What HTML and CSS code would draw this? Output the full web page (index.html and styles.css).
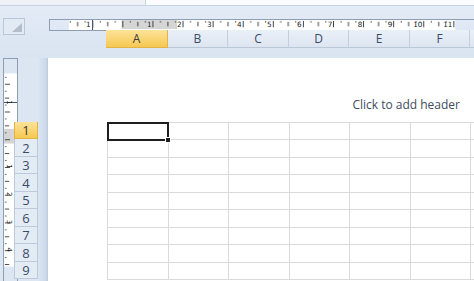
FILE: index.html
```html
<!DOCTYPE html>
<html>
<head>
<meta charset="utf-8">
<link rel="stylesheet" href="styles.css">
</head>
<body>
<div class="app">
  <div class="topstrip"><div class="ts-left"></div><div class="ts-right"></div></div>
  <div class="chrome">
    <div class="corner"><span class="tri"></span></div>
    <div class="hruler-area">
      <svg class="hruler" width="425" height="11" viewBox="0 0 425 11">
        <defs>
          <pattern id="hp" patternUnits="userSpaceOnUse" x="92" y="0" width="33.1" height="11">
            <rect x="0" y="1" width="1" height="7" fill="#333"/>
            <rect x="8.3" y="1" width="1" height="2" fill="#555"/>
            <rect x="16.5" y="2" width="1" height="5" fill="#333"/>
            <rect x="24.8" y="1" width="1" height="2" fill="#555"/>
          </pattern>
        </defs>
        <rect x="0" y="0" width="425" height="11" fill="#fff"/>
        <rect x="58" y="0" width="61" height="10" fill="#d5d5d5"/>
        <rect x="0" y="0" width="425" height="11" fill="url(#hp)"/>
        <rect x="25.5" y="0" width="1.2" height="11" fill="#4a5668"/>
        <g class="rnum" text-anchor="end">
          <text x="24" y="8">1</text>
          <text x="91" y="8">1</text>
          <text x="124" y="8">2</text>
          <text x="157" y="8">3</text>
          <text x="190" y="8">4</text>
          <text x="223" y="8">5</text>
          <text x="256" y="8">6</text>
          <text x="290" y="8">7</text>
          <text x="323" y="8">8</text>
          <text x="356" y="8">9</text>
          <text x="389" y="8">10</text>
          <text x="422" y="8">11</text>
        </g>
      </svg>
      <div class="colheads">
        <div class="ch w61 sel">A</div>
        <div class="ch w60">B</div>
        <div class="ch w61">C</div>
        <div class="ch w60">D</div>
        <div class="ch w61">E</div>
        <div class="ch w60">F</div>
        <div class="ch rest"></div>
      </div>
    </div>
  </div>
  <div class="body">
    <div class="side">
      <svg class="vruler" width="15" height="223" viewBox="0 0 15 223">
        <defs>
          <pattern id="vp" patternUnits="userSpaceOnUse" x="0" y="108" width="15" height="32">
            <rect x="1" y="0" width="6" height="1" fill="#333"/>
            <rect x="1" y="8" width="2" height="1" fill="#555"/>
            <rect x="1" y="16" width="5" height="1" fill="#333"/>
            <rect x="1" y="24" width="2" height="1" fill="#555"/>
          </pattern>
        </defs>
        <rect x="0" y="0" width="15" height="223" fill="#fff"/>
        <rect x="0" y="64" width="15" height="17" fill="#d5d5d5"/>
        <rect x="0" y="0" width="15" height="223" fill="url(#vp)"/>
        <rect x="0" y="33" width="15" height="1.2" fill="#4a5668"/>
        <g class="rnum" text-anchor="end">
          <text transform="translate(3 36) rotate(90)">1</text>
          <text transform="translate(3 110) rotate(90)">1</text>
          <text transform="translate(3 142) rotate(90)">2</text>
          <text transform="translate(3 174) rotate(90)">3</text>
          <text transform="translate(3 206) rotate(90)">4</text>
        </g>
      </svg>
      <div class="rowheads">
        <div class="rh r17 sel">1</div>
        <div class="rh r18">2</div>
        <div class="rh r17">3</div>
        <div class="rh r18">4</div>
        <div class="rh r17">5</div>
        <div class="rh r18">6</div>
        <div class="rh r17">7</div>
        <div class="rh r18">8</div>
        <div class="rh r17">9</div>
      </div>
    </div>
    <div class="page">
      <div class="page-header">Click to add header</div>
      <div class="gridwrap">
        <div class="grid">
          <div></div><div></div><div></div><div></div><div></div><div></div><div></div>
          <div></div><div></div><div></div><div></div><div></div><div></div><div></div>
          <div></div><div></div><div></div><div></div><div></div><div></div><div></div>
          <div></div><div></div><div></div><div></div><div></div><div></div><div></div>
          <div></div><div></div><div></div><div></div><div></div><div></div><div></div>
          <div></div><div></div><div></div><div></div><div></div><div></div><div></div>
          <div></div><div></div><div></div><div></div><div></div><div></div><div></div>
          <div></div><div></div><div></div><div></div><div></div><div></div><div></div>
          <div></div><div></div><div></div><div></div><div></div><div></div><div></div>
        </div>
        <div class="selbox"><span class="handle"></span></div>
      </div>
    </div>
  </div>
</div>
</body>
</html>
```

FILE: styles.css
```css
* { box-sizing: border-box; }
html, body { margin: 0; padding: 0; }
body {
  width: 474px;
  height: 281px;
  overflow: hidden;
  background: #dce6f2;
  font-family: "Open Sans", "Noto Sans", sans-serif;
}
.app { width: 474px; height: 281px; display: flex; flex-direction: column; }

.topstrip { height: 6px; display: flex; border-bottom: 1px solid #c7d3e2; flex: none; }
.ts-left { width: 146px; background: #eef2f7; border-right: 1px solid #c7d3e2; }
.ts-right { flex: 1; background: #fbfcfe; }

.chrome {
  height: 52px;
  flex: none;
  display: flex;
  background: linear-gradient(#e3ebf6, #d9e4f1);
}
.corner {
  position: relative;
  width: 22px;
  height: 17px;
  margin: 12px 0 0 3px;
  border: 1px solid #b8c6d8;
  background: #e2eaf4;
  flex: none;
}
.tri {
  position: absolute;
  right: 2px;
  bottom: 2px;
  width: 0;
  height: 0;
  border-left: 10px solid transparent;
  border-bottom: 9px solid #b4becb;
}
.hruler-area { margin-left: 24px; flex: 1; padding-top: 13px; display: flex; flex-direction: column; }
.hruler { display: block; border: 1px solid #8e9db2; border-right: 0; height: 12px; }
.rnum text { font-family: "DejaVu Sans", sans-serif; font-size: 8px; fill: #222; }

.colheads { display: flex; margin-left: 58px; height: 18px; margin-top: -1px; }
.ch {
  height: 18px;
  display: flex;
  align-items: center;
  justify-content: center;
  font-size: 12px;
  color: #3b4d66;
  background: linear-gradient(#eaf0f8, #dde5f0);
  border-right: 1px solid #c3cfde;
  border-bottom: 1px solid #b9c7d8;
}
.ch.w61 { width: 61px; }
.ch.w60 { width: 60px; }
.ch.rest { flex: 1; border-right: 0; }
.ch.sel {
  background: linear-gradient(#fce39a, #f6c852);
  border-right: 1px solid #e2b445;
  border-bottom: 1px solid #e2b445;
  color: #3a3a3a;
  width: 62px;
  margin-left: -1px;
}

.body { flex: 1; display: flex; min-height: 0; }
.side {
  width: 48px;
  flex: none;
  display: flex;
  align-items: flex-start;
  background: linear-gradient(to right, rgba(0,0,0,0) 38px, #cbd8e8 46px, #b8c8dc 48px);
}
.vruler { display: block; margin-left: 3px; border: 1px solid #8e9db2; border-bottom: 0; height: 223px; flex: none; }
.rowheads { width: 24px; margin-left: -4px; margin-top: 64px; flex: none; }
.rh {
  display: flex;
  align-items: center;
  justify-content: center;
  font-size: 13px;
  color: #3b4d66;
  background: #e3ebf5;
  border: 1px solid #bdcadb;
  border-top: 0;
}
.rh.r17 { height: 17px; }
.rh.r18 { height: 18px; }
.rh.sel {
  background: linear-gradient(#fce39a, #f6c852);
  border-color: #e2b445;
  color: #3a3a3a;
}

.page { flex: 1; background: #fff; padding-left: 59px; display: flex; flex-direction: column; min-width: 0; }
.page-header {
  height: 64px;
  padding: 39px 14px 0 0;
  text-align: right;
  font-size: 12px;
  line-height: 16px;
  color: #3e4c60;
}
.gridwrap { position: relative; }
.grid {
  display: grid;
  grid-template-columns: 61px 60px 61px 60px 61px 60px 10px;
  grid-template-rows: 17px 18px 17px 18px 17px 18px 17px 18px 17px;
  border-top: 1px solid #dadada;
  border-left: 1px solid #dadada;
}
.grid > div { border-right: 1px solid #dadada; border-bottom: 1px solid #dadada; }
.selbox {
  position: absolute;
  left: 0;
  top: 0;
  width: 62px;
  height: 19px;
  border: 2px solid #1e1e1e;
}
.handle {
  position: absolute;
  right: -4px;
  bottom: -4px;
  width: 6px;
  height: 6px;
  background: #1e1e1e;
  border: 1px solid #fff;
}
```
